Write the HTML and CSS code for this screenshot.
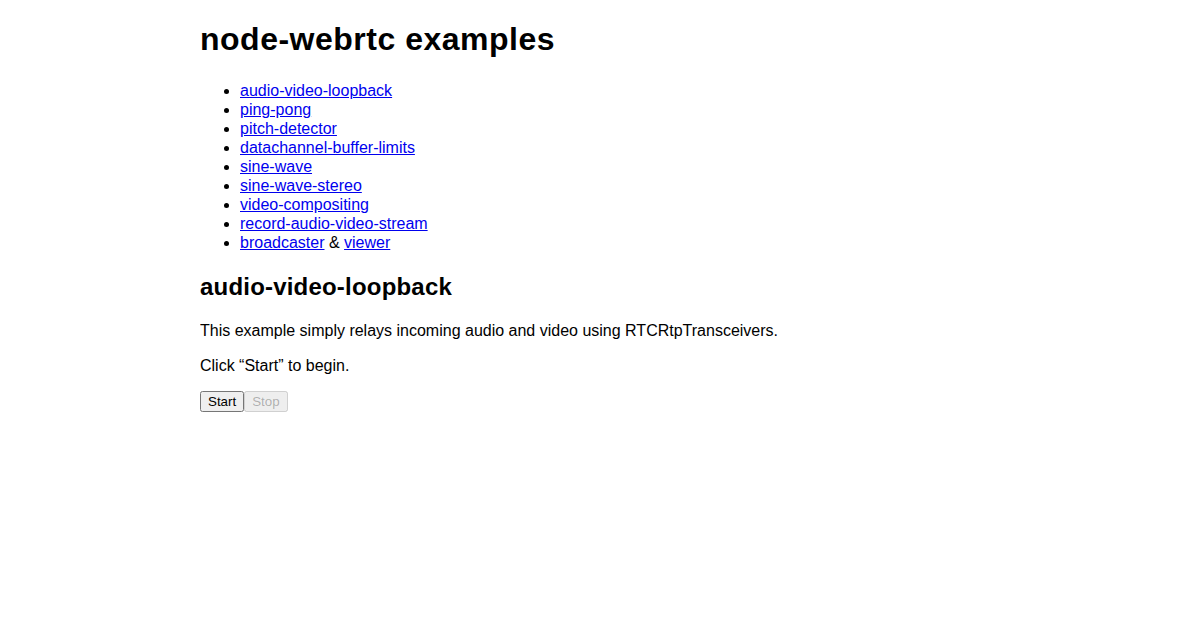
FILE: index.html
```html
<!DOCTYPE html>
<html>
<head>
<meta charset="utf-8">
<title>node-webrtc examples</title>
<link rel="stylesheet" href="styles.css">
</head>
<body>
<h1 class="title">node-webrtc examples</h1>
<ul class="examples">
<li><a href="#">audio-video-loopback</a></li>
<li><a href="#">ping-pong</a></li>
<li><a href="#">pitch-detector</a></li>
<li><a href="#">datachannel-buffer-limits</a></li>
<li><a href="#">sine-wave</a></li>
<li><a href="#">sine-wave-stereo</a></li>
<li><a href="#">video-compositing</a></li>
<li><a href="#">record-audio-video-stream</a></li>
<li><a href="#">broadcaster</a> &amp; <a href="#">viewer</a></li>
</ul>
<h2 class="subtitle">audio-video-loopback</h2>
<p class="text">This example simply relays incoming audio and video using RTCRtpTransceivers.</p>
<p class="text">Click “Start” to begin.</p>
<div class="controls"><button>Start</button><button disabled>Stop</button></div>
</body>
</html>
```
FILE: styles.css
```css
body {
  font-family: "Liberation Sans", Arial, Helvetica, sans-serif;
  max-width: 800px;
  margin: 0 auto;
  line-height: 19px;
}
.title {
  margin: 21px 0 23px;
  line-height: 37px;
  letter-spacing: 0.5px;
}
.subtitle {
  margin-top: 21px;
  line-height: 28px;
  letter-spacing: 0.2px;
}
.text {
  line-height: 19px;
}
```
